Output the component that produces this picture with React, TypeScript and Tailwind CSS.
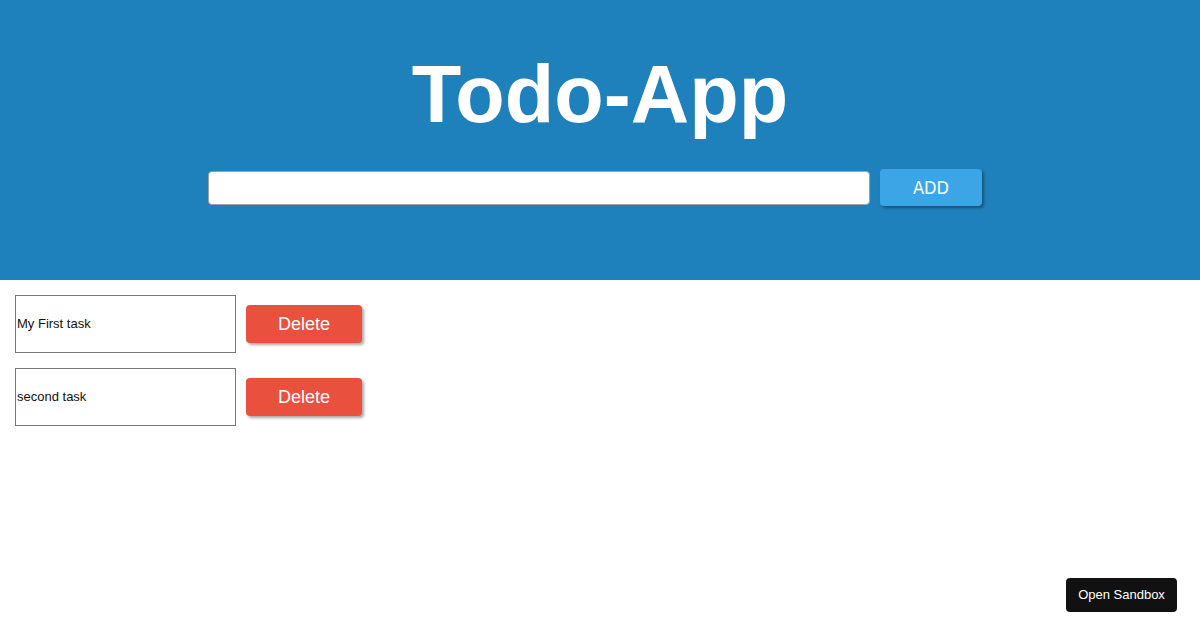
const tasks = ["My First task", "second task"];

const App = () => {
  return (
    <div className="relative min-h-[630px] w-full bg-white font-['Liberation_Sans',Arial,sans-serif]">
      {/* Header */}
      <header className="flex h-[280px] flex-col items-center bg-[#1f81bb] pt-[48px]">
        <h1 className="text-[81px] font-bold leading-[92px] text-white">Todo-App</h1>
        <div className="mt-[29px] mr-[10px] flex items-center gap-[10px]">
          <input
            type="text"
            className="h-[34px] w-[662px] rounded-[4px] border border-gray-400 bg-white px-2 outline-none"
          />
          <button className="h-[37px] w-[102px] rounded-[4px] bg-[#3ba5e6] font-['DejaVu_Sans_Condensed',sans-serif] text-[18px] text-white shadow-[2px_2px_3px_rgba(0,0,0,0.35)]">
            ADD
          </button>
        </div>
      </header>

      {/* Task list */}
      <ul className="flex flex-col gap-[15px] px-[15px] pt-[15px]">
        {tasks.map((task) => (
          <li key={task} className="flex items-center gap-[10px]">
            <div className="flex h-[58px] w-[221px] items-center border border-[#777] pl-[1px] text-[13px] text-[#111]">
              {task}
            </div>
            <button className="h-[38px] w-[116px] rounded-[4px] bg-[#ea503e] text-[18px] text-white shadow-[2px_2px_3px_rgba(0,0,0,0.35)]">
              Delete
            </button>
          </li>
        ))}
      </ul>

      {/* Floating badge */}
      <button className="absolute bottom-[18px] right-[23px] h-[34px] w-[111px] rounded-[4px] bg-[#111] text-[13px] text-white">
        Open Sandbox
      </button>
    </div>
  );
};

export default App;
